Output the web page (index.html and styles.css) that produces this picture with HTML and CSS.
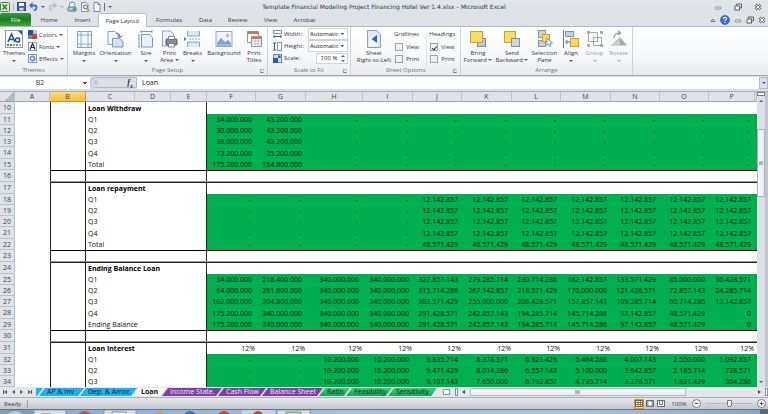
FILE: index.html
```html
<!DOCTYPE html>
<html lang="en">
<head>
<meta charset="utf-8">
<title>Template Financial Modeling Project Financing Hotel Ver 1.4.xlsx - Microsoft Excel</title>
<link rel="stylesheet" href="styles.css">
</head>
<body>
<header class="titlebar">
  <div class="quick">
    <svg width="10" height="10" viewBox="0 0 10 10"><rect x=".5" y=".5" width="9" height="9" rx="1" fill="#dff0dc" stroke="#3d8b40"/><path d="M2.500 2.500l4.500 5M7 2.500l-4.500 5" stroke="#2a7a30" stroke-width="1.500"/></svg>
    <i class="bar"></i>
    <button aria-label="Save"><svg width="9" height="9" viewBox="0 0 9 9"><rect x=".5" y=".5" width="8" height="8" fill="#4468b8" stroke="#2c478c"/><rect x="2" y="1" width="5" height="3" fill="#fff"/><rect x="2.500" y="6" width="4" height="2.500" fill="#d5dff0"/></svg></button>
    <button aria-label="Undo"><svg width="9" height="9" viewBox="0 0 9 9"><path d="M2 3.500h3.500q2 0 2 2t-2.500 3" fill="none" stroke="#3c6cc4" stroke-width="1.800"/><path d="M0 3.500L3.500 0v7z" fill="#3c6cc4"/></svg></button>
    <i class="down"></i>
    <button aria-label="Redo"><svg width="9" height="9" viewBox="0 0 9 9"><path d="M7 3.500H3.500q-2 0-2 2t2.500 3" fill="none" stroke="#b9bdc2" stroke-width="1.500"/><path d="M9 3.500L5.500 0v7z" fill="#b9bdc2"/></svg></button>
    <i class="down off"></i>
    <button aria-label="Quick print"><svg width="10" height="10" viewBox="0 0 10 10"><path d="M3 .500h4l1 3v3H2z" fill="#fff" stroke="#6c86a8"/><rect x="1" y="5" width="8" height="4" rx="1" fill="#b9cbe0" stroke="#587392"/><circle cx="7.500" cy="7.500" r="2" fill="#59a76c"/></svg></button>
    <button aria-label="Print preview"><svg width="10" height="10" viewBox="0 0 10 10"><path d="M1.500.500h5l1.500 2v7H1.500z" fill="#fff" stroke="#8391a5"/><circle cx="5.500" cy="5" r="2" fill="#dce9f8" stroke="#56698a"/><path d="M7 6.500l2.500 3" stroke="#d99a34" stroke-width="1.500"/></svg></button>
    <button aria-label="New"><svg width="8" height="10" viewBox="0 0 8 10"><path d="M1 .500h4l2 2v7H1z" fill="#fff" stroke="#7187aa"/><path d="M5 .500v2h2" fill="none" stroke="#7187aa"/></svg></button>
    <i class="bar dark"></i><i class="down"></i>
  </div>
  <h1>Template Financial Modeling Project Financing Hotel Ver 1.4.xlsx - Microsoft Excel</h1>
  <div class="winctl">
    <button aria-label="Minimize"><svg width="8" height="8" viewBox="0 0 8 8"><rect x="1" y="4" width="6" height="2" rx="1" fill="#fff" stroke="#6d737b" stroke-width=".8"/></svg></button>
    <button aria-label="Restore"><svg width="8" height="8" viewBox="0 0 8 8"><path d="M2.500 2.500v-1.500h5v4h-1.500" fill="none" stroke="#5b616a"/><rect x="1" y="3" width="4.500" height="4" fill="#fff" stroke="#5b616a"/></svg></button>
    <button aria-label="Close"><svg width="8" height="8" viewBox="0 0 8 8"><path d="M1.500 1.500l5 5M6.500 1.500l-5 5" stroke="#6d737b" stroke-width="2.600"/><path d="M1.500 1.500l5 5M6.500 1.500l-5 5" stroke="#fff" stroke-width="1"/></svg></button>
  </div>
</header>
<nav class="tabs">
  <button class="file">File</button>
  <button class="t-home">Home</button>
  <button class="t-insert">Insert</button>
  <button class="t-page on">Page Layout</button>
  <button class="t-formulas">Formulas</button>
  <button class="t-data">Data</button>
  <button class="t-review">Review</button>
  <button class="t-view">View</button>
  <button class="t-acrobat">Acrobat</button>
  <div class="docctl">
    <button aria-label="Collapse ribbon"><svg width="6" height="6" viewBox="0 0 6 6"><path d="M1 4.500L3 2l2 2.500z" fill="#fff" stroke="#666d76" stroke-width=".9"/></svg></button>
    <button aria-label="Help"><svg width="10" height="10" viewBox="0 0 10 10"><circle cx="5" cy="5" r="4.500" fill="#3f6cc8" stroke="#2c4f9f" stroke-width=".6"/><path d="M3.500 4q0-1.700 1.500-1.700t1.500 1.500q0 .8-1.500 1.600v.6M5 7v1" fill="none" stroke="#fff" stroke-width="1.100"/></svg></button>
    <button aria-label="Minimize workbook"><svg width="8" height="8" viewBox="0 0 8 8"><rect x="1" y="4" width="6" height="2" rx="1" fill="#fff" stroke="#6d737b" stroke-width=".8"/></svg></button>
    <button aria-label="Restore workbook"><svg width="8" height="8" viewBox="0 0 8 8"><path d="M2.500 2.500v-1.500h5v4h-1.500" fill="none" stroke="#5b616a"/><rect x="1" y="3" width="4.500" height="4" fill="#fff" stroke="#5b616a"/></svg></button>
    <button aria-label="Close workbook"><svg width="8" height="8" viewBox="0 0 8 8"><path d="M1.500 1.500l5 5M6.500 1.500l-5 5" stroke="#6d737b" stroke-width="2.600"/><path d="M1.500 1.500l5 5M6.500 1.500l-5 5" stroke="#fff" stroke-width="1"/></svg></button>
  </div>
</nav>
<section class="ribbon">
  <div class="group g-themes">
    <div class="items">
      <button class="big w28"><svg width="18" height="18" viewBox="0 0 18 18"><rect x=".5" y=".5" width="17" height="17" fill="#fff" stroke="#8c9bb2"/><path d="M13 1h4v4z" fill="#34588f"/><path d="M3 12L6.500 4 10 12M4.500 9.500h4" fill="none" stroke="#2c5482" stroke-width="1.600"/><circle cx="12.500" cy="10" r="2" fill="none" stroke="#2c5482" stroke-width="1.300"/><path d="M14.700 7.500v5" stroke="#2c5482"/><path d="M2 15h2" stroke="#4b79bd" stroke-width="2"/><path d="M5 15h2" stroke="#c94b40" stroke-width="2"/><path d="M8 15h2" stroke="#8ab04b" stroke-width="2"/><path d="M11 15h2" stroke="#4ba9c2" stroke-width="2"/><path d="M14 15h2" stroke="#eda23b" stroke-width="2"/></svg><span>Themes</span><i class="down"></i></button>
      <div class="stack">
        <button><svg width="9" height="9" viewBox="0 0 9 9"><path d="M0 0h5v5H0z" fill="#2f4f86"/><path d="M5 0h4v5H5z" fill="#b9c7dc"/><path d="M0 5h5v4H0z" fill="#7089b4"/><path d="M4 4h5v5H4z" fill="#c4453c"/></svg>Colors<i class="down"></i></button>
        <button><svg width="9" height="9" viewBox="0 0 9 9"><rect x=".5" y=".5" width="8" height="8" fill="#fff" stroke="#8d99aa"/><path d="M2 7.500l2.500-6 2.500 6M3 5.500h3" fill="none" stroke="#222b38" stroke-width="1.200"/></svg>Fonts<i class="down"></i></button>
        <button><svg width="9" height="9" viewBox="0 0 9 9"><rect x=".5" y=".5" width="8" height="8" fill="#f5f9ff" stroke="#8d99aa"/><circle cx="4.500" cy="4.500" r="2.300" fill="#cfe1f8" stroke="#5186cf" stroke-width="1.200"/></svg>Effects<i class="down"></i></button>
      </div>
    </div>
    <h2>Themes</h2>
  </div>
  <div class="group g-setup">
    <div class="items">
      <button class="big w26"><svg width="15" height="18" viewBox="0 0 15 18"><rect x=".5" y="1.500" width="14" height="16" fill="#f3f8fe" stroke="#8da2bd"/><path d="M4 1.500v16M11 1.500v16M.500 5h14M.500 14h14" stroke="#7c9cc5" stroke-width=".8"/></svg><span>Margins</span><i class="down"></i></button>
      <button class="big w37"><svg width="17" height="18" viewBox="0 0 17 18"><path d="M1 1.500h7l3 3v10H1z" fill="#f3f8fe" stroke="#8da2bd"/><path d="M5.500 8.500h7l3.500 3v5.500H5.500z" fill="#d3e1f2" stroke="#8099b9"/><path d="M9 3q4 0 4 4M11 5.500l2 2.500 2-2.500" fill="none" stroke="#5a6f8b"/></svg><span>Orientation</span><i class="down"></i></button>
      <button class="big w24"><svg width="16" height="18" viewBox="0 0 16 18"><path d="M3.500 4.500h8l3 3v9.500h-11z" fill="#e8f1fb" stroke="#7d97b9"/><path d="M3 1.500h11M1 5v12" stroke="#6f9bd1"/><path d="M3 0v3M14 0v3M0 5h2M0 17h2" stroke="#6f9bd1" stroke-width=".8"/></svg><span>Size</span><i class="down"></i></button>
      <button class="big w23"><svg width="17" height="18" viewBox="0 0 17 18"><path d="M1.500 1h8l3 3v12h-11z" fill="#edf4fc" stroke="#8da2bd"/><rect x="5" y="9" width="11" height="6" rx="1" fill="#888f98" stroke="#555c66"/><path d="M7.500 6.500h6v3h-6zM7.500 13.500h6v3.500h-6z" fill="#fff" stroke="#626a75" stroke-width=".8"/></svg><span>Print</span><span>Area <i class="down"></i></span></button>
      <button class="big w23"><svg width="17" height="18" viewBox="0 0 17 18"><path d="M3.500 1v5h12V1M3.500 17v-5h12v5" fill="#dbe7f5" stroke="#8da2bd"/><path d="M5 9h11" stroke="#86a5cd" stroke-dasharray="2 1"/><path d="M0 7l2.500 2L0 11z" fill="#3f7ad0"/></svg><span>Breaks</span><i class="down"></i></button>
      <button class="big w40"><svg width="18" height="18" viewBox="0 0 18 18"><rect x="1" y="1.500" width="16" height="15" fill="#eef5fd" stroke="#94a9c5"/><path d="M2 13l4-5 4 4 3-2 3 3v3H2z" fill="#7ba2d6"/><path d="M2 15h14" stroke="#b9cfe9"/><circle cx="12.500" cy="5.500" r="1.700" fill="#f4b36b"/></svg><span>Background</span></button>
      <button class="big w20"><svg width="16" height="18" viewBox="0 0 16 18"><path d="M1.500 1.500h11v11h-11z" fill="#fff" stroke="#8797ad"/><path d="M1.500 3h11" stroke="#df7048" stroke-width="2"/><path d="M5.500 6.500h10v10h-10z" fill="#fff" stroke="#8797ad"/><path d="M5.500 8h10" stroke="#df7048" stroke-width="2"/><path d="M5.500 11h10M5.500 14h10M9 9v7.500M12 9v7.500" stroke="#9cb4d3" stroke-width=".8"/></svg><span>Print</span><span>Titles</span></button>
    </div>
    <h2>Page Setup</h2><i class="launch"></i>
  </div>
  <div class="group g-scale">
    <div class="items fields">
      <svg width="9" height="9" viewBox="0 0 9 9"><rect x=".5" y=".5" width="8" height="3" fill="#fff" stroke="#8192aa"/><path d="M1 6.500h7M1 5v3M8 5v3" stroke="#355b98"/></svg><label for="w">Width:</label><select id="w"><option>Automatic</option></select>
      <svg width="9" height="9" viewBox="0 0 9 9"><rect x="4.500" y=".5" width="4" height="8" fill="#fff" stroke="#8192aa"/><path d="M1.500 1v7M0 1h3M0 8h3" stroke="#355b98"/></svg><label for="h">Height:</label><select id="h"><option>Automatic</option></select>
      <svg width="9" height="9" viewBox="0 0 9 9"><rect x=".5" y=".5" width="8" height="8" fill="#cbdcf0" stroke="#7186a5"/><rect x="0" y="4" width="5" height="5" fill="#2f5b9d"/><path d="M4 5l3-3M5 2h2v2" stroke="#263f6d" fill="none"/></svg><label for="s">Scale:</label><div class="spin"><input id="s" value="100 %"><span class="arrows"><i class="up"></i><i class="down"></i></span></div>
    </div>
    <h2>Scale to Fit</h2><i class="launch"></i>
  </div>
  <div class="group g-sheet">
    <div class="items">
      <button class="big w40"><svg width="14" height="18" viewBox="0 0 14 18"><path d="M.500.500h9l4 4v13H.500z" fill="#dfeaf8" stroke="#8aa2c2"/><path d="M3 7h8v9H3z" fill="#fff" opacity=".7"/><path d="M10 5v8L4.500 9z" fill="#2766c5"/></svg><span>Sheet</span><span>Right-to-Left</span></button>
      <fieldset><legend>Gridlines</legend><label><input type="checkbox">View</label><label><input type="checkbox">Print</label></fieldset>
      <fieldset><legend>Headings</legend><label><input type="checkbox" checked>View</label><label><input type="checkbox">Print</label></fieldset>
    </div>
    <h2>Sheet Options</h2><i class="launch"></i>
  </div>
  <div class="group g-arrange">
    <div class="items">
      <button class="big w34"><svg width="18" height="18" viewBox="0 0 18 18"><rect x="8.500" y="8.500" width="8" height="8" fill="#c0c6ce" stroke="#858c96"/><rect x="1.500" y="1.500" width="12" height="11" fill="#fbdc67" stroke="#c9a433"/></svg><span>Bring</span><span>Forward <i class="down"></i></span></button>
      <button class="big w34"><svg width="18" height="18" viewBox="0 0 18 18"><rect x="1.500" y="1.500" width="11" height="11" fill="#fbdc67" stroke="#c9a433"/><rect x="8.500" y="8.500" width="8" height="8" fill="#d0d5dc" stroke="#858c96"/></svg><span>Send</span><span>Backward <i class="down"></i></span></button>
      <button class="big w31"><svg width="18" height="18" viewBox="0 0 18 18"><rect x="2.500" y=".5" width="7" height="7" fill="#c9d0d9" stroke="#8b949f"/><rect x="2.500" y="10.500" width="7" height="6" fill="#c9d0d9" stroke="#8b949f"/><rect x="6.500" y="4.500" width="7" height="7" fill="#fbd75c" stroke="#c9a433"/><path d="M11 8l5.500 5-2.500.3 1 2.700-1.500.5-1-2.500-1.500 1.500z" fill="#fff" stroke="#597ba8" stroke-width=".8"/></svg><span>Selection</span><span>Pane</span></button>
      <button class="big w22"><svg width="18" height="18" viewBox="0 0 18 18"><path d="M1.500 0v18" stroke="#4b7fca"/><rect x="3.500" y="1.500" width="8" height="5" fill="#c9d0d9" stroke="#8b949f"/><rect x="8.500" y="8.500" width="8" height="8" fill="#fbd75c" stroke="#c9a433"/><path d="M8 12H4M5.500 10L3.500 12l2 2" fill="none" stroke="#3a70c2"/></svg><span>Align</span><i class="down"></i></button>
      <button class="big w25 off"><svg width="18" height="18" viewBox="0 0 18 18"><path d="M2.500 2.500h9v9h-9zM7.500 7.500h8v8h-8z" fill="none" stroke="#a4a8ad"/><path d="M1 1h3v3H1zM14 1h3v3h-3zM1 14h3v3H1zM14 14h3v3h-3z" fill="#aaaeb3"/></svg><span>Group</span><i class="down"></i></button>
      <button class="big w23 off"><svg width="18" height="18" viewBox="0 0 18 18"><path d="M1 15.500h16L10 7z" fill="#a6aaaf"/><path d="M1 15.500L10 7v8.500z" fill="#c9ccd0"/><path d="M4 8q0-5 6-5M8 1l2.500 2L8 5" fill="none" stroke="#8e9399" stroke-width="1.200"/></svg><span>Rotate</span><i class="down"></i></button>
    </div>
    <h2>Arrange</h2>
  </div>
</section>
<section class="formula">
  <input class="name" aria-label="Name box" value="B2"><i class="pick"></i>
  <div class="fx"><i class="knob"></i><button>f<sub>x</sub></button></div>
  <input class="content" aria-label="Formula" value="Loan">
  <button class="expand" aria-label="Expand formula bar"><i class="down"></i></button>
</section>
<main class="sheet">
  <div class="viewport">
    <table>
      <colgroup><col class="c15"><col class="c35"><col class="c36"><col class="c49"><col class="c36"><col class="c36"><col class="c49"><col class="c50"><col class="c57"><col class="c50"><col class="c49"><col class="c50"><col class="c49"><col class="c50"><col class="c49"><col class="c49"><col class="c46"><col></colgroup>
      <thead><tr><th class="corner"></th><th>A</th><th class="sel">B</th><th>C</th><th>D</th><th>E</th><th>F</th><th>G</th><th>H</th><th>I</th><th>J</th><th>K</th><th>L</th><th>M</th><th>N</th><th>O</th><th>P</th><th></th></tr></thead>
      <tbody id="rows"></tbody>
    </table>
  </div>
  <div class="vscroll"><i class="split"></i><i class="up"></i><div class="thumb"></div><i class="down"></i></div>
</main>
<nav class="sheets">
  <div class="navs"><svg width="30" height="6" viewBox="0 0 30 6" fill="#555c66"><path d="M0 1h1v4H0zM4 1v4L1 3zM12 1v4L9 3zM17 1v4l3-2zM25 1v4l3-2zM28 1h1v4h-1z"/></svg></div>
  <i class="stub"></i>
  <button class="cyan w45">AP &amp; Inv</button>
  <button class="cyan w57">Dep. &amp; Amor.</button>
  <button class="active w33">Loan</button>
  <button class="purple w60">Income State.</button>
  <button class="purple w48">Cash Flow</button>
  <button class="purple w61">Balance Sheet</button>
  <button class="green w31">Ratio</button>
  <button class="green w46">Feasibility</button>
  <button class="green w49">Sensitivity</button>
  <button class="new" aria-label="Insert worksheet"><svg width="10" height="8" viewBox="0 0 10 8"><rect x="2.500" y="1.500" width="6" height="5" fill="#fff" stroke="#6f8fc0"/><circle cx="2.500" cy="2" r="1.500" fill="#f5b94a"/></svg></button>
  <div class="hscroll"><i class="split"></i><i class="left"></i><div class="thumb"><i></i></div><i class="right"></i><i class="split"></i></div>
</nav>
<footer class="status">
  <span class="ready">Ready</span>
  <div class="views">
    <button class="on" aria-label="Normal"><svg width="8" height="7" viewBox="0 0 8 7"><rect x=".5" y=".5" width="7" height="6" fill="#fff" stroke="#6c6550"/><path d="M0 2.500h8M0 4.500h8M3 0v7M5.500 0v7" stroke="#6c6550" stroke-width=".8"/></svg></button>
    <button aria-label="Page layout"><svg width="8" height="7" viewBox="0 0 8 7"><rect x=".5" y=".5" width="7" height="6" fill="#999fa7" stroke="#6a7079"/><rect x="2.500" y="1.500" width="3" height="4" fill="#fff"/></svg></button>
    <button aria-label="Page break preview"><svg width="8" height="7" viewBox="0 0 8 7"><rect x=".5" y=".5" width="7" height="6" fill="#fff" stroke="#6a7079"/><path d="M2.500 0v4.500h3V0" fill="none" stroke="#6a7079"/></svg></button>
  </div>
  <span class="pct">100%</span>
  <button class="round" aria-label="Zoom out"><svg width="9" height="9" viewBox="0 0 9 9"><circle cx="4.500" cy="4.500" r="4" fill="#fff" stroke="#777d86"/><path d="M2.500 4.500h4" stroke="#555b64"/></svg></button>
  <input type="range" aria-label="Zoom" min="0" max="100" value="50">
  <button class="round" aria-label="Zoom in"><svg width="9" height="9" viewBox="0 0 9 9"><circle cx="4.500" cy="4.500" r="4" fill="#fff" stroke="#777d86"/><path d="M2.500 4.500h4M4.500 2.500v4" stroke="#555b64"/></svg></button>
</footer>
<div class="taskbar">
  <svg width="320" height="5" viewBox="0 0 320 5"><path d="M0 0h33v5H0z" fill="#7f9bb8"/><path d="M6 5q9-8 18 0z" fill="#b5cbe0"/><path d="M34 0h32v5H34zM104 0h32v5h-32zM277 0h33v5h-33z" fill="#d6e0eb" stroke="#60758e" stroke-width=".6"/><path d="M42 3h9v2h-9z" fill="#c9ae72"/><path d="M77 5q8-8 15 0z" fill="#c25343"/><path d="M112 2h14v3h-14z" fill="#fff" stroke="#6489bd"/><path d="M154 5l7-4 3 1-3 3z" fill="#c4a15e"/><path d="M183 5q7-8 14 0z" fill="#3972c0"/><path d="M217 5q7-8 14 0z" fill="#d23c31"/><path d="M242 0h33v5h-33z" fill="#c5d3e1"/><path d="M252 5q6-8 12 0z" fill="#b74841"/><path d="M286 2h15v3h-15z" fill="#b9d3b5" stroke="#74a272"/></svg>
  <i class="desk"></i>
</div>
<script src="sheet.js"></script>
</body>
</html>
```
FILE: styles.css
```css
* { box-sizing: border-box; }
html, body { height: 100%; }
body {
  margin: 0;
  display: flex;
  flex-direction: column;
  overflow: hidden;
  background: #dfe3e8;
  color: #33383f;
  font: 6px/8px "Open Sans", "Noto Sans", sans-serif;
}
button, input, select {
  margin: 0;
  padding: 0;
  border: 0;
  background: none;
  color: inherit;
  font: inherit;
  border-radius: 0;
  outline: 0;
}
h1, h2 { margin: 0; font: inherit; }
h1 { font-family: "DejaVu Sans", sans-serif; white-space: nowrap; }
svg { display: block; flex: none; }
i { display: inline-block; flex: none; }
.down, .up { border: 2px solid transparent; width: 0; height: 0; }
.down { border-top-color: #5a5f67; border-bottom: 0; }
.up { border-bottom-color: #5a5f67; border-top: 0; }
.off { color: #9a9ea4; }
.down.off, .off .down { border-top-color: #b0b4b9; }

.titlebar {
  display: grid;
  grid-template-columns: 1fr auto 1fr;
  align-items: center;
  height: 13px;
  background: linear-gradient(#e3e7eb, #dde1e6);
}
.quick { display: flex; align-items: center; gap: 3px; }
.quick .bar { width: 1px; height: 8px; background: #b5bac1; }
.quick .bar.dark { background: #6a6f77; }
.winctl { display: flex; justify-content: flex-end; gap: 12px; padding-right: 6px; }

.tabs { display: flex; height: 14px; border-bottom: 1px solid #b2b8c1; line-height: 12px; }
.tabs > button { flex: none; }
.file { width: 31px; background: linear-gradient(#3a9a3c, #1c7a22 50%, #41a83c); color: #fff; border-radius: 2px 2px 0 0; }
.t-home { width: 36px; }
.t-insert { width: 31px; }
.t-page { width: 49px; }
.t-formulas { width: 44px; }
.t-data { width: 29px; }
.t-review { width: 35px; }
.t-view { width: 31px; }
.t-acrobat { width: 37px; }
.tabs .on { height: 14px; background: #fff; border: 1px solid #b9bfc8; border-bottom: 0; border-radius: 2px 2px 0 0; line-height: 10px; }
.docctl { display: flex; align-items: center; gap: 4px; margin-left: auto; padding-right: 2px; }

.ribbon { display: flex; height: 49px; background: linear-gradient(#fff, #f7f8fa 60%, #e8ebef); border-bottom: 1px solid #a2a9b3; }
.group { display: flex; flex-direction: column; position: relative; border-right: 1px solid #cdd2d9; padding: 1px 3px 0; }
.items { display: flex; height: 38px; }
.group h2 { text-align: center; color: #6b727d; line-height: 8px; }
.g-themes { width: 68px; padding: 1px 0 0; }
.g-setup { width: 200px; }
.g-scale { width: 83px; }
.g-sheet { width: 110px; }
.g-arrange { width: 172px; padding: 1px 0 0; }
.launch { position: absolute; right: 3px; bottom: 2px; width: 4px; height: 4px; border: 1px solid #a4aab3; border-right-color: #d4d8dd; border-bottom-color: #7d848e; }
.big { display: flex; flex-direction: column; align-items: center; flex: none; padding-top: 2px; line-height: 7px; white-space: nowrap; }
.big svg { margin-bottom: 2px; }
.big > .down { margin-top: 3px; }
.big span .down { vertical-align: middle; }
.w20 { width: 20px; } .w22 { width: 22px; } .w23 { width: 23px; } .w24 { width: 24px; } .w25 { width: 25px; }
.w26 { width: 26px; } .w28 { width: 28px; } .w31 { width: 31px; } .w34 { width: 34px; } .w37 { width: 37px; } .w40 { width: 40px; }
.stack { display: flex; flex-direction: column; gap: 3px; padding-top: 2px; }
.stack button { display: flex; align-items: center; gap: 2px; height: 9px; }
.fields { display: grid; grid-template-columns: 9px 22px 40px; grid-template-rows: 12px 12px 12px; column-gap: 2px; align-items: center; padding-left: 2px; }
.fields select {
  appearance: none;
  width: 40px;
  height: 12px;
  padding: 0 1px;
  border: 1px solid #cfd4da;
  color: #111;
  background: conic-gradient(from 315deg at 50% 100%, #5a6069 90deg, transparent 0) right 3px center / 3px 2px no-repeat, #fff;
}
.spin { display: flex; align-items: center; width: 32px; height: 11px; margin-left: 8px; border: 1px solid #cfd4da; background: #fff; color: #111; }
.spin input { width: 24px; text-align: center; }
.arrows { display: flex; flex-direction: column; gap: 3px; }
fieldset { border: 0; margin: 0; padding: 0; width: 35px; min-width: 0; }
fieldset:last-child { border-left: 1px solid #e2e5e9; padding-left: 2px; width: 33px; }
legend { padding: 0; margin: 0 0 3px; line-height: 12px; }
fieldset label { display: flex; align-items: center; gap: 3px; height: 8px; margin: 0 0 4px 1px; }
fieldset input { appearance: none; width: 8px; height: 8px; border: 1px solid #9ba2ac; background: #f0f1f4; display: grid; place-items: center; }
fieldset input:checked::after { content: ""; width: 2px; height: 4px; border: solid #333a44; border-width: 0 1px 1px 0; transform: rotate(40deg); }

.formula { display: flex; align-items: center; height: 16px; padding: 1px 0 3px; background: #d9dde3; border-bottom: 1px solid #a6adb8; }
.name { width: 80px; height: 12px; text-align: center; background: #fff; font-size: 7px; }
.pick { width: 10px; height: 12px; background: linear-gradient(#4a4f57, #4a4f57) 3px 5px / 4px 1px no-repeat, linear-gradient(#4a4f57, #4a4f57) 4px 6px / 2px 1px no-repeat, #fff; }
.fx { display: flex; justify-content: space-between; align-items: center; width: 47px; height: 11px; padding: 0 3px 0 2px; background: #dce0e6; border: 1px solid #b4bac4; border-radius: 6px 0 0 6px; }
.knob { width: 5px; height: 5px; border-radius: 50%; background: #c4cad3; }
.fx button { font: italic bold 8px/9px "Liberation Serif", serif; color: #333; }
.fx sub { font-size: 6px; line-height: 0; }
.content { flex: 1; min-width: 0; height: 12px; background: #fff; padding-left: 5px; color: #111; font-size: 7px; }
.expand { display: grid; place-items: center; width: 9px; height: 12px; border: 1px solid #b1b7c0; background: #dde1e6; }

.sheet { flex: 1; display: flex; min-height: 0; }
.viewport { flex: 1; min-width: 0; overflow: hidden; background: #fff; }
table { width: 100%; table-layout: fixed; border-collapse: separate; border-spacing: 0; font-size: 7px; line-height: 9px; color: #111; }
.c15 { width: 15px; } .c35 { width: 35px; } .c36 { width: 36px; } .c46 { width: 46px; } .c49 { width: 49px; } .c50 { width: 50px; } .c57 { width: 57px; }
th, td { padding: 0; height: 11px; white-space: nowrap; overflow: hidden; }
th { font-weight: normal; color: #3f444c; background: #dfe3e8; border-right: 1px solid #bcc2cb; border-bottom: 1px solid #bcc2cb; text-align: center; }
thead th { height: 10px; line-height: 8px; border-bottom-color: #9ca4b0; }
.sel { background: linear-gradient(#fbdc7c, #f5bf3c); border-color: #c69a2d; }
.corner { background: linear-gradient(135deg, #dfe3e8 60%, #b3bac4 60%); }
.b { border-left: 1px solid #222; border-right: 1px solid #222; }
.label { padding-left: 2px; border-right: 1px solid #222; }
.num { background: #00b050; color: #001a0a; text-align: right; padding-right: 4px; }
.dash { padding-right: 5px; }
.rate { text-align: right; padding-right: 1px; }
.title th, .title td, .q4 th, .q4 td, .blank th, .blank td { height: 12px; }
.title .label { font-weight: bold; color: #000; }
.title .line { border-top: 1px solid #222; }
tr:first-child.title .line { border-top: 0; }
.blank .line { border-top: 1px solid #000; border-bottom: 1px solid #999; }

.vscroll { display: flex; flex-direction: column; align-items: center; width: 11px; background: #dde1e6; border-right: 3px solid #c0c6d0; }
.vscroll .split { width: 8px; height: 4px; border: 1px solid #777e88; background: #fff; margin-bottom: 4px; }
.vscroll .thumb { width: 8px; height: 68px; margin-top: 27px; border: 1px solid #aeb4bd; background: linear-gradient(#b3b8bf, #b3b8bf) center / 4px 4px no-repeat, linear-gradient(90deg, #fff, #e5e8ec); }
.vscroll > .down { margin: auto 0 4px; }

.sheets { display: flex; height: 10px; padding: 1px 0; background: #e3e7eb; line-height: 8px; font-size: 7px; }
.navs { flex: none; width: 36px; padding: 1px 0 0 3px; }
.sheets > button { flex: none; height: 8px; margin-right: -4px; padding-left: 8px; text-align: left; white-space: nowrap; clip-path: polygon(6px 0, 100% 0, calc(100% - 6px) 100%, 0 100%); }
.stub { width: 7px; height: 8px; margin-right: -4px; background: #1db3ef; clip-path: polygon(0 0, 100% 0, 1px 100%, 0 100%); }
.sheets .cyan { background: #1db3ef; color: #05202f; }
.sheets .purple { background: #7b40a6; color: #f4edf9; }
.sheets .green { background: linear-gradient(#3ecb80, #17a855); color: #062a15; }
.sheets .active { background: #fff; color: #111; font-weight: bold; }
.w33 { width: 33px; } .w45 { width: 45px; } .w46 { width: 46px; } .w48 { width: 48px; } .w49 { width: 49px; } .w57 { width: 57px; } .w60 { width: 60px; } .w61 { width: 61px; }
.sheets .new { width: 22px; margin: 0; clip-path: none; }
.hscroll { flex: 1; display: flex; align-items: center; background: #e3e6ea; }
.hscroll .split { width: 3px; height: 8px; border: 1px solid #8a919b; background: #fff; }
.left, .right { border: 2px solid transparent; height: 0; }
.left { border-right: 3px solid #4a4f57; border-left: 0; margin: 0 5px 0 4px; }
.right { border-left: 3px solid #4a4f57; border-right: 0; margin: 0 4px 0 auto; }
.hscroll .thumb { width: 69%; height: 8px; display: grid; place-items: center; border: 1px solid #b4bac3; background: linear-gradient(#fff, #e4e7eb); }
.hscroll .thumb i { width: 5px; height: 4px; background: #b3b8bf; }

.status { display: flex; align-items: center; height: 12px; border-top: 1px solid #a8aeb8; background: linear-gradient(#e6e9ec, #c3c8ce); }
.ready { width: 28px; padding-left: 4px; border-right: 1px solid #9aa1ab; }
.views { display: flex; gap: 1px; margin-left: auto; }
.views button { width: 10px; height: 10px; display: grid; place-items: center; }
.views .on { background: #fbd568; border: 1px solid #cf9b28; }
.pct { width: 26px; text-align: center; }
.status input { appearance: none; width: 46px; height: 9px; margin: 0 5px; background: linear-gradient(#b3b8bf, #b3b8bf) center / 100% 1px no-repeat; }
.status input::-webkit-slider-thumb { appearance: none; width: 5px; height: 7px; background: #fff; border: 1px solid #777d86; border-radius: 1px 1px 3px 3px; }
.status .round:last-child { margin-right: 2px; }

.taskbar { display: flex; justify-content: space-between; height: 5px; border-top: 1px solid #60758e; background: linear-gradient(90deg, #8aa9cb, #a5bfdd 45%, #a9c2df 75%, #8aa5c4); }
.desk { width: 8px; height: 5px; background: #5c6875; }
```
FILE: sheet.js
```js
const D = '-';
const rep = (v, n) => Array(n).fill(v);
const loan = (f, g) => [f, g, ...rep(D, 9)];
const pay = v => [...rep(D, 4), ...rep(v, 7)];
const blocks = [
  ['Loan Withdraw', null, [
    ['Q1', loan('34.000.000', '43.200.000')],
    ['Q2', loan('30.000.000', '43.200.000')],
    ['Q3', loan('38.000.000', '43.200.000')],
    ['Q4', loan('73.200.000', '35.200.000')],
    ['Total', loan('175.200.000', '164.800.000')]]],
  ['Loan repayment', null, [
    ['Q1', pay('12.142.857')], ['Q2', pay('12.142.857')], ['Q3', pay('12.142.857')],
    ['Q4', pay('12.142.857')], ['Total', pay('48.571.429')]]],
  ['Ending Balance Loan', null, [
    ['Q1', '34.000.000 218.400.000 340.000.000 340.000.000 327.857.143 279.285.714 230.714.286 182.142.857 133.571.429 85.000.000 36.428.571'.split(' ')],
    ['Q2', '64.000.000 261.600.000 340.000.000 340.000.000 315.714.286 267.142.857 218.571.429 170.000.000 121.428.571 72.857.143 24.285.714'.split(' ')],
    ['Q3', '102.000.000 304.800.000 340.000.000 340.000.000 303.571.429 255.000.000 206.428.571 157.857.143 109.285.714 60.714.286 12.142.857'.split(' ')],
    ['Q4', '175.200.000 340.000.000 340.000.000 340.000.000 291.428.571 242.857.143 194.285.714 145.714.286 97.142.857 48.571.429 0'.split(' ')],
    ['Ending Balance', '175.200.000 340.000.000 340.000.000 340.000.000 291.428.571 242.857.143 194.285.714 145.714.286 97.142.857 48.571.429 0'.split(' ')]]],
  ['Loan Interest', '12%', [
    ['Q1', '- - 10.200.000 10.200.000 9.835.714 8.378.571 6.921.429 5.464.286 4.007.143 2.550.000 1.092.857'.split(' ')],
    ['Q2', '- - 10.200.000 10.200.000 9.471.429 8.014.286 6.557.143 5.100.000 3.642.857 2.185.714 728.571'.split(' ')],
    ['Q3', '- - 10.200.000 10.200.000 9.107.143 7.650.000 6.192.857 4.735.714 3.278.571 1.821.429 364.286'.split(' ')]]]
];
let n = 10;
let html = '';
const row = (cls, label, cells) => {
  html += `<tr class="${cls}"><th>${n++}</th><td></td><td class="b line"></td><td class="label line" colspan="3">${label}</td>${cells}</tr>`;
};
for (const [name, rate, lines] of blocks) {
  row('title', name, rep(`<td class="rate line">${rate || ''}</td>`, 11).join('') + '<td class="line"></td>');
  lines.forEach(([label, values], i) => {
    const cells = values.map(v => `<td class="num${v === D ? ' dash' : ''}">${v}</td>`).join('');
    html += `<tr class="${i === 3 ? 'q4' : 'q'}"><th>${n++}</th><td></td><td class="b"></td><td class="label" colspan="3">${label}</td>${cells}<td class="num"></td></tr>`;
  });
  if (lines.length === 5) row('blank', '', rep('<td class="line"></td>', 12).join(''));
}
document.getElementById('rows').innerHTML = html;
```
